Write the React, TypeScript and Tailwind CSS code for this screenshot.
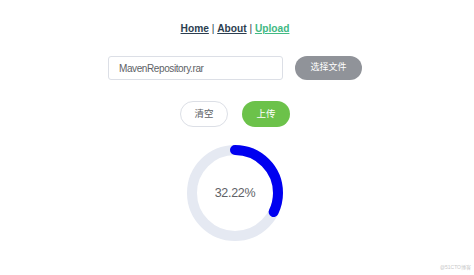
import React from "react";

const font = { fontFamily: '"Liberation Sans", "Noto Sans CJK SC", Arial, sans-serif' };

function ProgressCircle({ percent }: { percent: number }) {
  const size = 96;
  const stroke = 10;
  const r = (size - stroke) / 2;
  const c = 2 * Math.PI * r;
  return (
    <div className="relative w-[96px] h-[96px]">
      <svg width={size} height={size} viewBox={`0 0 ${size} ${size}`}>
        <circle cx={size / 2} cy={size / 2} r={r} fill="none" stroke="#e5e9f2" strokeWidth={stroke} />
        <circle
          cx={size / 2}
          cy={size / 2}
          r={r}
          fill="none"
          stroke="#0000f0"
          strokeWidth={stroke}
          strokeLinecap="round"
          strokeDasharray={`${(c * percent) / 100} ${c}`}
          transform={`rotate(-90 ${size / 2} ${size / 2})`}
        />
      </svg>
      <div className="absolute inset-0 flex items-center justify-center text-[12.5px] text-[#606266] tracking-[-0.3px]">
        {percent.toFixed(2)}%
      </div>
    </div>
  );
}

export default function App() {
  return (
    <div className="relative w-[474px] h-[275px] bg-white overflow-hidden" style={font}>
      <div className="flex flex-col items-center pr-[4px]">
        {/* nav */}
        <nav className="mt-[22px] h-[14px] leading-[14px] text-[10.2px] font-bold text-[#2c3e50]">
          <a className="underline">Home</a>
          <span className="font-normal"> | </span>
          <a className="underline">About</a>
          <span className="font-normal"> | </span>
          <a className="underline text-[#42b983]">Upload</a>
        </nav>

        {/* file picker */}
        <div className="mt-[20px] flex items-center gap-[12px]">
          <div className="w-[175px] h-[24px] border border-[#dcdfe6] rounded-[3px] flex items-center pl-[10px] text-[10px] text-[#606266] tracking-[-0.4px]">
            MavenRepository.rar
          </div>
          <button className="w-[67px] h-[24px] rounded-full bg-[#909399] text-white text-[9px]">
            选择文件
          </button>
        </div>

        {/* actions */}
        <div className="mt-[21px] flex items-center gap-[14px]">
          <button className="w-[48px] h-[26px] rounded-full border border-[#dcdfe6] bg-white text-[#606266] text-[9.5px]">
            清空
          </button>
          <button className="w-[48px] h-[26px] rounded-full bg-[#6cc24a] text-white text-[9.5px]">
            上传
          </button>
        </div>

        <div className="mt-[18px]">
          <ProgressCircle percent={32.22} />
        </div>
      </div>

      <div className="absolute right-[3px] bottom-[4px] text-[5px] text-[#c8c8c8]">@51CTO博客</div>
    </div>
  );
}
